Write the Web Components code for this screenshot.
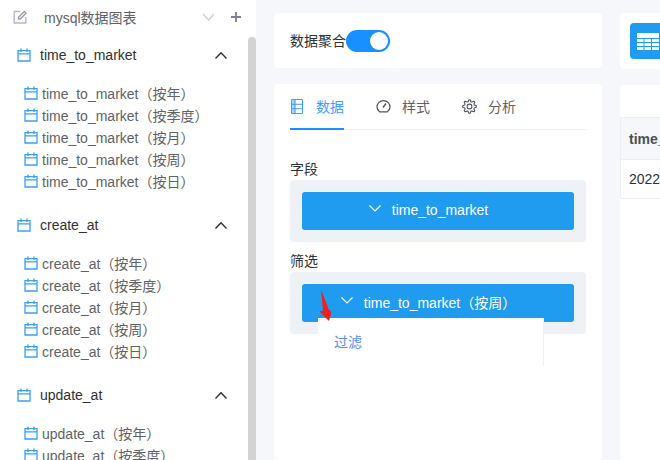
<!DOCTYPE html>
<html>
<head>
<meta charset="utf-8">
<style>
  html, body { margin: 0; height: 100%; overflow: hidden; background: #f5f7fa; }
  body { font: 14px "Liberation Sans", "Noto Sans CJK SC", sans-serif; color: #303133; }
  #app { display: flex; height: 460px; width: 660px; overflow: hidden; }
</style>
</head>
<body>
<div id="app">
  <chart-sidebar title="mysql数据图表">
    <field-group name="time_to_market"></field-group>
    <field-group name="create_at"></field-group>
    <field-group name="update_at"></field-group>
  </chart-sidebar>
  <config-column></config-column>
  <preview-column></preview-column>
</div>

<script>
const CAL = `<svg width="14" height="14" viewBox="0 0 14 14" fill="none" stroke="#38a0f3" stroke-width="1.300"><path d="M1 2.600h12v10.400h-12z M1 5.800h12 M4 .5v3.500 M10 .5v3.500"/></svg>`;
const CHEVRON_UP = `<svg width="14" height="9" viewBox="0 0 14 9" fill="none" stroke="#303133" stroke-width="1.400"><path d="M1.500 7.500 7 1.800l5.500 5.700"/></svg>`;
const CHEVRON_DOWN = `<svg class="chev" width="14" height="9" viewBox="0 0 14 9" fill="none" stroke="#fff" stroke-width="1.200"><path d="M1.500 1.500 7 7l5.500-5.500"/></svg>`;

// outline of a small cog, teeth alternate between two radii
function gearPath(cx, cy, outer, inner, teeth) {
  const pts = [];
  for (let i = 0; i < teeth * 4; i++) {
    const a = (i - 0.5) * Math.PI / (teeth * 2);
    const r = (i % 4 < 2) ? outer : inner;
    pts.push((cx + r * Math.cos(a)).toFixed(2) + ' ' + (cy + r * Math.sin(a)).toFixed(2));
  }
  return 'M' + pts.join('L') + 'z';
}

class ChartSidebar extends HTMLElement {
  constructor() {
    super();
    this.attachShadow({ mode: 'open' });
  }

  connectedCallback() {
    this.shadowRoot.innerHTML = `
      <style>
        :host { display: flex; flex-direction: column; flex: none; width: 256px; height: 460px; background: #fff; overflow: hidden; }
        .head { display: flex; align-items: center; flex: none; height: 34px; padding: 0 15px 2px 13px; color: #606266; }
        .head .title { margin-left: 17px; flex: 1; }
        .head .down { margin-right: 16px; display: flex; }
        .head .plus { display: flex; }
        .body { display: flex; flex: 1; min-height: 0; }
        .list { flex: 1; min-width: 0; overflow: hidden; }
        .thumb { flex: none; width: 8px; background: #d3d3d3; border-radius: 4px 4px 0 0; margin-top: 1px; }
      </style>
      <div class="head">
        <svg width="14" height="14" viewBox="0 0 14 14" fill="none" stroke="#b6b8c6" stroke-width="1.400"><path d="M12.800 7v6H1.200V1.500H7"/><path d="M5.500 9V7.200L11.300 1.500 13 3.200 7.300 9z" stroke="#9a9dab"/></svg>
        <span class="title">${this.getAttribute('title')}</span>
        <span class="down"><svg width="13" height="8" viewBox="0 0 13 8" fill="none" stroke="#c9ccd3" stroke-width="1.200"><path d="M1 1l5.500 6L12 1"/></svg></span>
        <span class="plus"><svg width="10" height="12" viewBox="0 0 10 12" fill="none" stroke="#7b7f93" stroke-width="1.800"><path d="M5 1v10M0 6h10"/></svg></span>
      </div>
      <div class="body">
        <div class="list"><slot></slot></div>
        <div class="thumb"></div>
      </div>`;
  }
}

class FieldGroup extends HTMLElement {
  constructor() {
    super();
    this.attachShadow({ mode: 'open' });
  }

  connectedCallback() {
    const name = this.getAttribute('name');
    const units = ['按年', '按季度', '按月', '按周', '按日'];
    this.shadowRoot.innerHTML = `
      <style>
        :host { display: block; height: 170px; }
        .group { display: flex; align-items: center; height: 38px; padding: 0 20px 0 17px; color: #303133; }
        .group span { flex: 1; margin-left: 9px; }
        .group svg { display: block; }
        ul { list-style: none; margin: 8px 0 0; padding: 0 0 0 24px; color: #606266; }
        li { display: flex; align-items: center; height: 22px; white-space: nowrap; }
        li span { margin-left: 4px; }
      </style>
      <div class="group">${CAL}<span>${name}</span>${CHEVRON_UP}</div>
      <ul>${units.map(u => `<li>${CAL}<span>${name}（${u}）</span></li>`).join('')}</ul>`;
  }
}

class ConfigColumn extends HTMLElement {
  constructor() {
    super();
    this.attachShadow({ mode: 'open' });
  }

  connectedCallback() {
    this.shadowRoot.innerHTML = `
      <style>
        :host { display: flex; flex-direction: column; flex: none; width: 328px; margin-left: 18px; padding-top: 13px; gap: 16px; box-sizing: border-box; height: 460px; }
        .card { background: #fff; border-radius: 4px; }
        .aggregate { display: flex; align-items: center; flex: none; height: 55px; padding-left: 16px; }
        .aggregate span.txt { padding-bottom: 2px; }
        .switch { flex: none; position: relative; width: 44px; height: 22px; border-radius: 11px; background: #1890ff; }
        .switch::after { content: ""; position: absolute; right: 2px; top: 2px; width: 18px; height: 18px; border-radius: 50%; background: #fff; }
        .panel { flex: 1; padding: 0 16px; position: relative; }
        .tabs { display: flex; height: 46px; border-bottom: 1px solid #eeeff3; box-sizing: border-box; color: #606266; }
        .tab { display: flex; align-items: center; width: 54px; height: 46px; box-sizing: border-box; margin-right: 32px; border-bottom: 2px solid transparent; flex: none; }
        .tab.on { color: #409eff; border-bottom-color: #1890ff; }
        .tab .ico { flex: none; width: 26px; display: flex; }
        .tab svg { display: block; }
        .label { margin-top: 30px; height: 19px; line-height: 18px; color: #303133; }
        .label.next { margin-top: 10px; height: 18px; }
        .well { background: #eef1f5; border-radius: 4px; padding: 12px; margin-top: 1px; height: 38px; }
        .label.next + .well { margin-top: 2px; }
        .pill { display: flex; align-items: center; justify-content: center; gap: 10px; height: 38px; padding: 0 20px 2px 0; box-sizing: border-box; background: #1f9cf0; color: #fff; border-radius: 3px; }
        .chev { margin-top: -3px; }
        .menu { position: absolute; left: 44px; top: 234px; width: 226px; height: 48px; background: #fff; border-right: 1px solid #eef0f4; box-sizing: border-box; padding: 15px 16px; color: #5b8def; line-height: 18px; }
        .mark { position: absolute; left: 44px; top: 204px; }
      </style>
      <div class="card aggregate"><span class="txt">数据聚合</span><span class="switch"></span></div>
      <div class="card panel">
        <div class="tabs">
          <div class="tab on">
            <span class="ico"><svg width="14" height="15" viewBox="0 0 14 15" fill="none" stroke="#409eff"><path d="M1.500.500h4v14h-4z" fill="#a9d3fb" stroke="none"/><path d="M1.500.500h11v14h-11z M1.500 5.300h11M1.500 9.700h11M5 .5v14"/></svg></span>数据
          </div>
          <div class="tab">
            <span class="ico"><svg width="15" height="14" viewBox="0 0 15 14" fill="none" stroke="#50535c" stroke-width="1.200"><path d="M3.600 12.800A6.500 6.200 0 1 1 11.400 12.800z"/><path d="M7 8.500l3-4" stroke-width="1.400"/></svg></span>样式
          </div>
          <div class="tab">
            <span class="ico"><svg width="15" height="15" viewBox="0 0 15 15" fill="none" stroke="#50535c" stroke-width="1.100" stroke-linejoin="round"><path d="${gearPath(7.5, 7.5, 6.8, 5, 8)}"/><circle cx="7.500" cy="7.500" r="2.400"/></svg></span>分析
          </div>
        </div>
        <div class="label">字段</div>
        <div class="well"><div class="pill">${CHEVRON_DOWN}<span>time_to_market</span></div></div>
        <div class="label next">筛选</div>
        <div class="well"><div class="pill">${CHEVRON_DOWN}<span>time_to_market（按周）</span></div></div>
        <div class="menu">过滤</div>
        <svg class="mark" width="14" height="34" viewBox="0 0 14 34"><path d="M3 1.500 11 22l2.500 2L11 33 1.500 23.500 5 22.500z" fill="#f0201c"/></svg>
      </div>`;
  }
}

class PreviewColumn extends HTMLElement {
  constructor() {
    super();
    this.attachShadow({ mode: 'open' });
  }

  connectedCallback() {
    this.shadowRoot.innerHTML = `
      <style>
        :host { display: flex; flex-direction: column; flex: none; width: 240px; margin-left: 18px; padding-top: 13px; gap: 16px; box-sizing: border-box; height: 460px; }
        .card { background: #fff; border-radius: 4px; }
        .bar { flex: none; height: 56px; padding: 10px; box-sizing: border-box; }
        .btn { display: flex; align-items: center; justify-content: center; width: 36px; height: 36px; background: #1f9cf0; border-radius: 4px; }
        .sheet { flex: 1; padding-top: 32px; }
        table { border-collapse: collapse; width: 100%; }
        th, td { border: 1px solid #ebeef5; border-right: 0; padding: 0 8px; text-align: left; height: 38px; white-space: nowrap; color: #303133; font-weight: 400; }
        th { background: #f5f7fa; height: 41px; font-weight: 700; color: #4a4e57; }
      </style>
      <div class="card bar">
        <div class="btn"><svg width="22" height="17" viewBox="0 0 22 17"><path fill="#fff" d="M0 0h22v5H0zM0 6h6.500v3H0zM7.500 6h6.500v3H7.500zM15 6h7v3h-7zM0 10h6.500v3H0zM7.500 10h6.500v3H7.500zM15 10h7v3h-7zM0 14h6.500v3H0zM7.500 14h6.500v3H7.500zM15 14h7v3h-7z"/></svg></div>
      </div>
      <div class="card sheet">
        <table><tr><th>time_to_market</th></tr><tr><td>2022-01-01</td></tr></table>
      </div>`;
  }
}

customElements.define('chart-sidebar', ChartSidebar);
customElements.define('field-group', FieldGroup);
customElements.define('config-column', ConfigColumn);
customElements.define('preview-column', PreviewColumn);
</script>
</body>
</html>
